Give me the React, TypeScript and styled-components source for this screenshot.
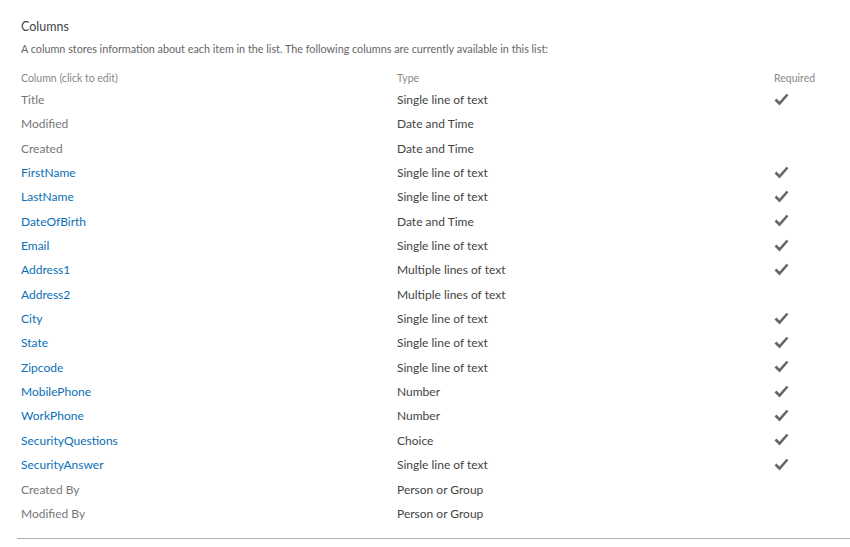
import React from "react";
import styled, { createGlobalStyle } from "styled-components";

const Global = createGlobalStyle`
  html, body { margin: 0; padding: 0; background: #fff; }
  body { font-family: "Lato", "Open Sans", sans-serif; color: #444; }
`;

const Page = styled.div`
  padding: 18px 0 0 17px;
  width: 833px;
`;

const Inner = styled.div`
  padding-left: 4px;
`;

const Heading = styled.h2`
  margin: 0;
  font-size: 12.5px;
  font-weight: 400;
  color: #444;
  line-height: 18px;
`;

const Desc = styled.p`
  margin: 5px 0 0;
  font-size: 10.8px;
  line-height: 16px;
  color: #666;
`;

const Table = styled.div`
  margin-top: 12px;
  display: grid;
  grid-template-columns: 376px 377px 1fr;
`;

const HeadCell = styled.div`
  font-size: 10.5px;
  color: #888;
  height: 19px;
  line-height: 19px;
`;

const Cell = styled.div<{ $link?: boolean }>`
  font-size: 12px;
  height: 24.35px;
  line-height: 24.35px;
  color: ${(p) => (p.$link ? "#0a6fb7" : "#777")};
  display: flex;
  align-items: center;
`;

const TypeCell = styled(Cell)`
  color: #444;
`;

const Rule = styled.div`
  margin-top: 12px;
  height: 1px;
  background: #b0b0b0;
`;

const Check = () => (
  <svg width="15" height="13" viewBox="0 0 15 13" style={{ marginTop: -2 }}>
    <polyline points="1.5,6.5 5.5,10.5 13.5,1.5" fill="none" stroke="#666" strokeWidth="2.6" />
  </svg>
);

const rows: [string, string, boolean, boolean][] = [
  ["Title", "Single line of text", true, false],
  ["Modified", "Date and Time", false, false],
  ["Created", "Date and Time", false, false],
  ["FirstName", "Single line of text", true, true],
  ["LastName", "Single line of text", true, true],
  ["DateOfBirth", "Date and Time", true, true],
  ["Email", "Single line of text", true, true],
  ["Address1", "Multiple lines of text", true, true],
  ["Address2", "Multiple lines of text", false, true],
  ["City", "Single line of text", true, true],
  ["State", "Single line of text", true, true],
  ["Zipcode", "Single line of text", true, true],
  ["MobilePhone", "Number", true, true],
  ["WorkPhone", "Number", true, true],
  ["SecurityQuestions", "Choice", true, true],
  ["SecurityAnswer", "Single line of text", true, true],
  ["Created By", "Person or Group", false, false],
  ["Modified By", "Person or Group", false, false],
];

export default function App() {
  return (
    <>
      <Global />
      <Page>
        <Inner>
          <Heading>Columns</Heading>
          <Desc>
            A column stores information about each item in the list. The following columns are currently available in this list:
          </Desc>
          <Table>
            <HeadCell>Column (click to edit)</HeadCell>
            <HeadCell>Type</HeadCell>
            <HeadCell>Required</HeadCell>
            {rows.map(([name, type, req, link]) => (
              <React.Fragment key={name}>
                <Cell $link={link}>{name}</Cell>
                <TypeCell>{type}</TypeCell>
                <Cell>{req ? <Check /> : null}</Cell>
              </React.Fragment>
            ))}
          </Table>
        </Inner>
        <Rule />
      </Page>
    </>
  );
}
